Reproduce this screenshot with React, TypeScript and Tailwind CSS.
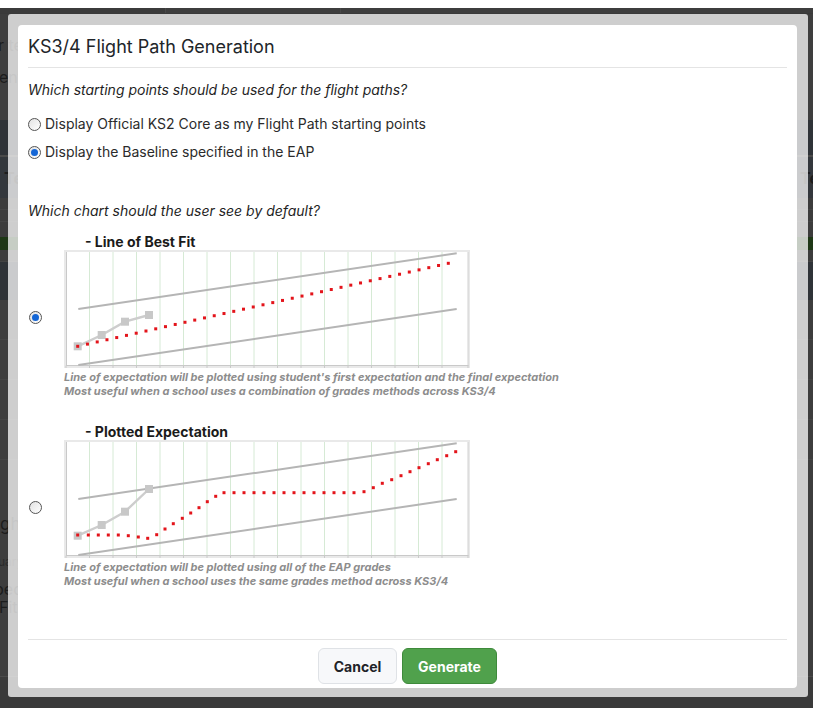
import React from 'react';

type Pt = [number, number];

// chart geometry, local to the 406x118 chart image
const gridXs = Array.from({ length: 16 }, (_, i) => 2 + 23.5 * (i + 1));
const tickXs = [2, ...gridXs, 404];

const bestFitDots: Pt[] = Array.from({ length: 39 }, (_, i) => [
    13.7 + ((384.3 - 13.7) / 38) * i,
    96.3 + ((13.3 - 96.3) / 38) * i,
]);

const plottedDots: Pt[] = [
    [13.7, 95], [24.3, 95], [34.3, 95], [44.3, 95], [54.3, 95], [64.3, 95.7], [74.3, 97], [83.7, 98.3],
    [92.7, 94.7], [101, 89], [109.3, 83.7], [118.3, 78.3], [126.7, 73], [135, 67.7], [143.3, 61.7],
    [151.7, 56.3], [160, 52.7],
    ...Array.from({ length: 13 }, (_, i) => [170 + i * 10, 52.7] as Pt),
    [300, 51.7], [309.3, 47.7], [318.3, 43.3], [327.7, 39.7], [337, 35.7], [346, 31.7], [355, 27.7],
    [364.3, 23.7], [373.3, 19.7], [382.7, 15.7], [391.7, 11.7],
];

const bestFitSquares: Pt[] = [[13.7, 96.3], [37.7, 85], [61, 71.7], [85, 65]];
const plottedSquares: Pt[] = [[13.7, 95.7], [37.7, 85], [61, 71.7], [85, 49]];

const Chart: React.FC<{ dots: Pt[]; squares: Pt[] }> = ({ dots, squares }) => (
    <svg width="406" height="118" viewBox="0 0 406 118" className="block">
        <rect x="1" y="1" width="404" height="116" fill="#ffffff" stroke="#e9e9e9" strokeWidth="2" />
        {gridXs.map((x) => (
            <line key={x} x1={x} y1="2" x2={x} y2="115" stroke="#d6ead5" strokeWidth="1" />
        ))}
        <line x1="2.5" y1="2" x2="2.5" y2="116" stroke="#c9c9c9" strokeWidth="1" />
        <line x1="404" y1="2" x2="404" y2="116" stroke="#d2d2d2" strokeWidth="1" />
        <line x1="2" y1="115.5" x2="404.5" y2="115.5" stroke="#c9c9c9" strokeWidth="1" />
        {tickXs.map((x) => (
            <line key={`t${x}`} x1={x} y1="115.5" x2={x} y2="118" stroke="#c9c9c9" strokeWidth="1" />
        ))}
        {/* band */}
        <line x1="14.3" y1="59" x2="392.7" y2="3.3" stroke="#b5b5b5" strokeWidth="2" />
        <line x1="14.3" y1="115" x2="392.7" y2="59" stroke="#b5b5b5" strokeWidth="2" />
        {/* actual grades */}
        <polyline points={squares.map((p) => p.join(',')).join(' ')} fill="none" stroke="#cdcdcd" strokeWidth="2.4" />
        {squares.map(([x, y], i) => (
            <rect key={`s${i}`} x={x - 4} y={y - 4} width="8" height="8" fill="#c8c8c8" />
        ))}
        {/* expectation */}
        {dots.map(([x, y], i) => (
            <rect key={`d${i}`} x={x - 1.5} y={y - 1.5} width="3" height="3" fill="#e3141b" />
        ))}
    </svg>
);

const Radio: React.FC<{ checked?: boolean }> = ({ checked }) => (
    <span className="flex h-[13px] w-[13px] shrink-0 items-center justify-center rounded-full border border-[#555] bg-gradient-to-br from-[#e2e2e2] to-white">
        {checked && <span className="h-[7px] w-[7px] rounded-full bg-[#1466d6]" />}
    </span>
);

const ChartOption: React.FC<{ title: string; checked?: boolean; dots: Pt[]; squares: Pt[]; lines: string[] }> = ({
    title,
    checked,
    dots,
    squares,
    lines,
}) => (
    <div className="flex items-center">
        <div className="w-[36px] pl-px pt-[3px]">
            <Radio checked={checked} />
        </div>
        <div>
            <div className="pl-[21px] text-[14px] font-bold leading-[16px] text-[#1b1b1b]">{title}</div>
            <Chart dots={dots} squares={squares} />
            <div className="mt-[2px] text-[11px] font-bold italic leading-[14px] text-[#8d8d8d]">
                {lines.map((l) => (
                    <div key={l}>{l}</div>
                ))}
            </div>
        </div>
    </div>
);

const App: React.FC = () => {
    return (
        <div className="relative h-[708px] w-[813px] overflow-hidden bg-white font-['Inter','Liberation_Sans',sans-serif]">
            {/* page behind the modal */}
            <div className="flex flex-col pt-[8px] text-[16px] leading-[20px] text-[#1c1c1c]">
                <div className="relative h-[112px] bg-[#3e3e3e]">
                    <div className="flex h-[6px] border-b border-[#3a3a3a]">
                        <div className="w-[165px] bg-[#3b3b3b]" />
                        <div className="w-[175px] border-l border-[#484848]" />
                        <div className="flex-1 border-l border-[#484848]" />
                    </div>
                    <div className="ml-[-2px] mt-[21px]">r te</div>
                    <div className="ml-[-1px] mt-[12px]">ent</div>
                </div>
                <div className="h-[35px] bg-[#2f3338]" />
                <div className="h-[2px] bg-[#4a4a4a]" />
                <div className="flex h-[41px] items-center justify-between bg-[#33373c] pl-[4px] pr-0 font-bold">
                    <span>Te</span>
                    <span className="mr-[-6px]">Te</span>
                </div>
                <div className="flex h-[39px] flex-col bg-[#3c3c3c]">
                    <div className="h-[12px] border-b border-[#444]" />
                    <div className="h-[12px] border-b border-[#444]" />
                </div>
                <div className="h-[13px] bg-[#1e3816]" />
                <div className="h-[12px] border-b border-[#444] bg-[#3c3c3c]" />
                <div className="h-[38px] bg-[#2f3338]" />
                <div className="flex h-[376px] flex-col bg-[#3d3d3d]">
                    <div className="h-[40px] border-b border-[#444]" />
                    <div className="h-[40px] border-b border-[#444]" />
                    <div className="h-[40px] border-b border-[#444]" />
                    <div className="h-[40px] border-b border-[#444]" />
                    <div className="ml-[-4px] mt-[54px] text-[17px]">igh</div>
                    <div className="ml-[-2px] mt-[20px] text-[12px] leading-[16px] text-[#2a2a2a]">uary</div>
                    <div className="ml-[-6px] mt-[10px] leading-[18px]">pec</div>
                    <div className="ml-[-1px] leading-[18px]">Fit</div>
                </div>
                <div className="h-[40px] border-t border-[#4a4a4a] bg-[#3a3a3a]" />
            </div>

            {/* modal */}
            <div className="absolute left-[8px] top-[14px] h-[683px] w-[800px] rounded-[3px] bg-white/75 pl-[10px] pt-[11px]">
                <div className="flex h-[663px] w-[779px] flex-col rounded-[4px] bg-white">
                    <div className="mx-[10px] border-b border-[#e4e4e4] pb-[6px] pt-[8px]">
                        <h1 className="text-[18px] leading-7 text-[#212529]">KS3/4 Flight Path Generation</h1>
                    </div>

                    <div className="flex-1 px-[10px] pt-[12px] text-[14px] leading-5 text-[#2b2b2b]">
                        <p className="italic text-[#1f1f1f]">Which starting points should be used for the flight paths?</p>
                        <div className="mt-[14px] flex flex-col gap-[8px]">
                            <label className="flex items-center gap-[4px]">
                                <Radio />
                                <span>Display Official KS2 Core as my Flight Path starting points</span>
                            </label>
                            <label className="flex items-center gap-[4px]">
                                <Radio checked />
                                <span>Display the Baseline specified in the EAP</span>
                            </label>
                        </div>

                        <p className="mt-[39px] italic text-[#1f1f1f]">Which chart should the user see by default?</p>

                        <div className="mt-[13px] flex flex-col gap-[26px]">
                            <ChartOption
                                title="- Line of Best Fit"
                                checked
                                dots={bestFitDots}
                                squares={bestFitSquares}
                                lines={[
                                    "Line of expectation will be plotted using student's first expectation and the final expectation",
                                    'Most useful when a school uses a combination of grades methods across KS3/4',
                                ]}
                            />
                            <ChartOption
                                title="- Plotted Expectation"
                                dots={plottedDots}
                                squares={plottedSquares}
                                lines={[
                                    'Line of expectation will be plotted using all of the EAP grades',
                                    'Most useful when a school uses the same grades method across KS3/4',
                                ]}
                            />
                        </div>
                    </div>

                    <div className="mx-[10px] flex justify-center gap-[5px] border-t border-[#e4e4e4] pb-[4px] pt-[8px]">
                        <button className="h-[36px] w-[79px] rounded-[6px] border border-[#dfe2e6] bg-[#f7f8fa] text-[14px] font-bold text-[#1f2328]">
                            Cancel
                        </button>
                        <button className="h-[36px] w-[95px] rounded-[6px] border border-[#3e8a3b] bg-[#50a14c] text-[14px] font-bold text-white">
                            Generate
                        </button>
                    </div>
                </div>
            </div>
        </div>
    );
};

export default App;
